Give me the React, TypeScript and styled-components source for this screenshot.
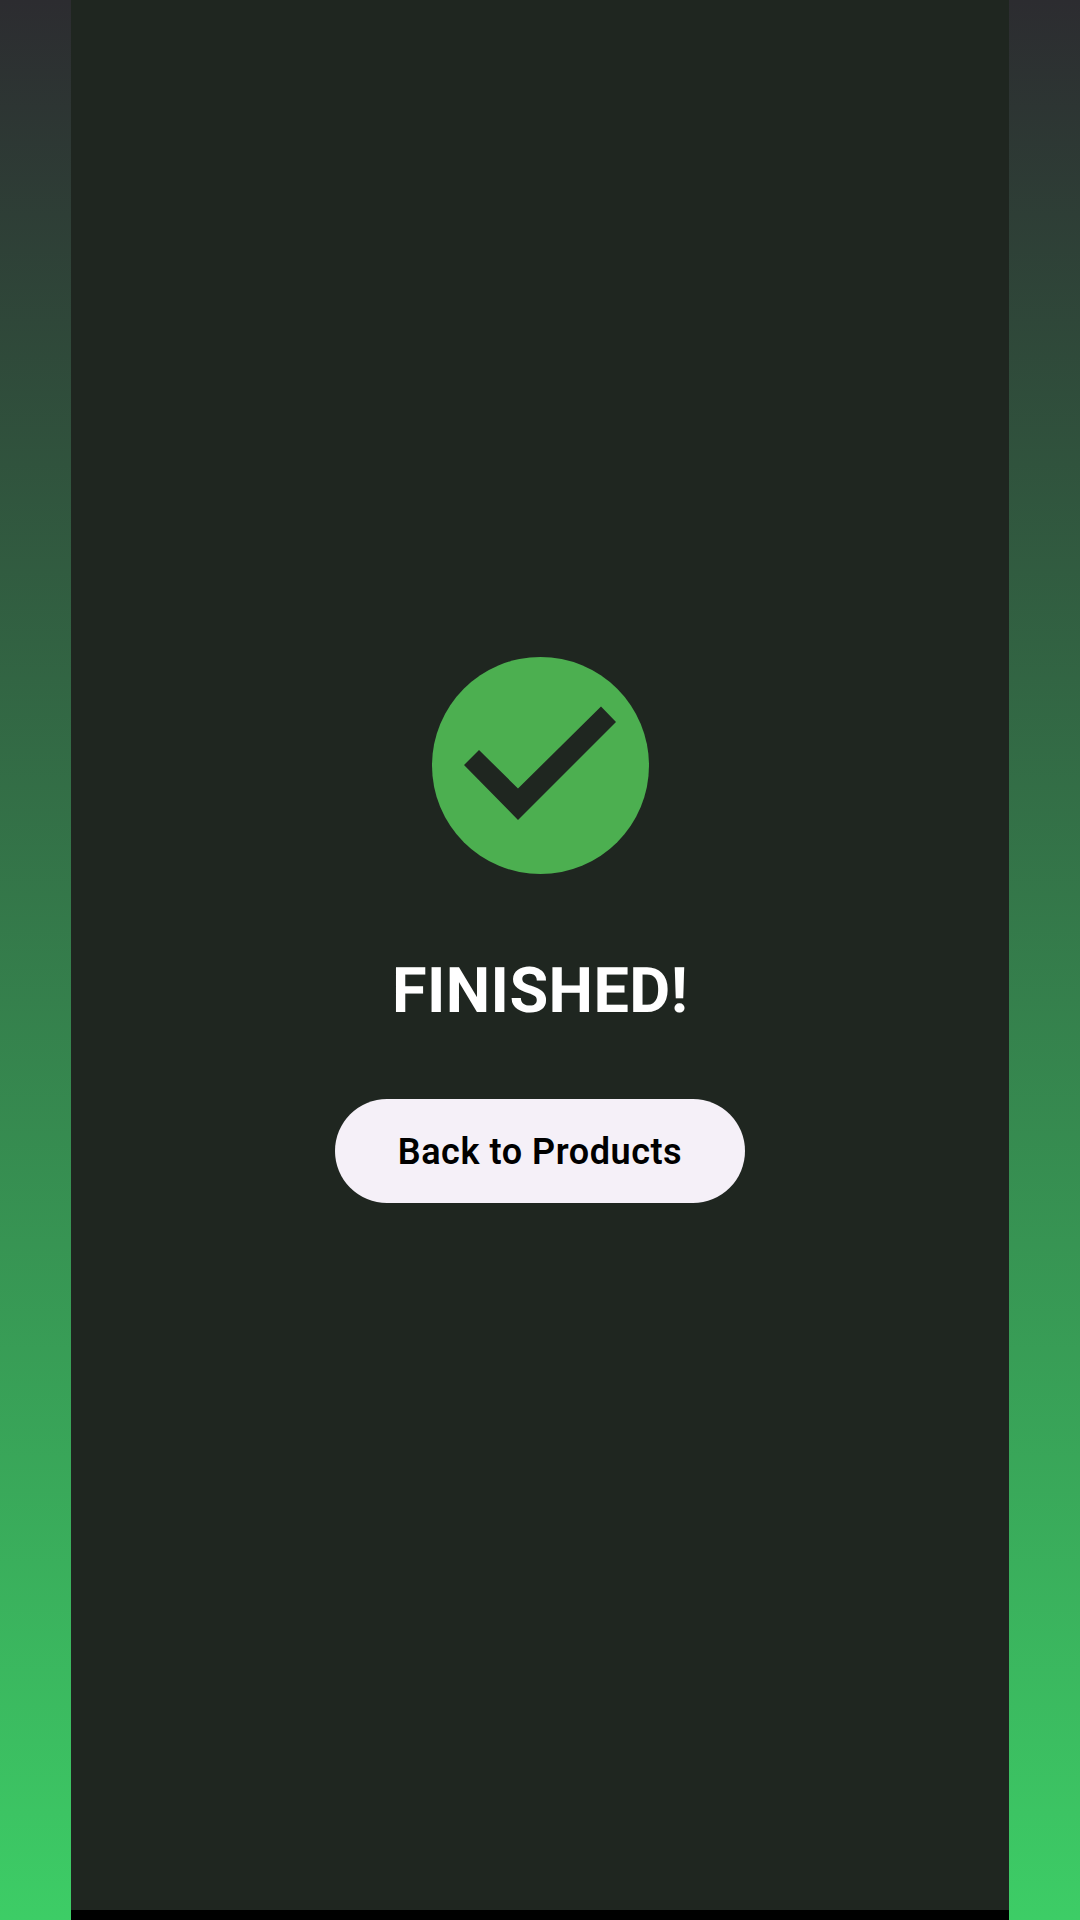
import React from "react";
import styled, { createGlobalStyle } from "styled-components";

const GlobalStyle = createGlobalStyle`
  html, body {
    margin: 0;
    padding: 0;
    background: #000;
  }
`;

const Page = styled.div`
  display: flex;
  justify-content: center;
  width: 1080px;
  height: 1920px;
  overflow: hidden;
  background: linear-gradient(180deg, #2c2c30 0%, #3dcd66 100%);
  font-family: Roboto, "Liberation Sans", sans-serif;
  text-rendering: geometricPrecision;
`;

const Phone = styled.div`
  display: flex;
  flex-direction: column;
  width: 938px;
  background: #000;
`;

const Screen = styled.main`
  display: flex;
  flex-direction: column;
  align-items: center;
  justify-content: center;
  height: 1910px;
  padding-bottom: 50px;
  box-sizing: border-box;
  background: #1f2620;
`;

const CheckBadge = styled.svg`
  display: block;
  width: 217px;
  height: 217px;
`;

const Title = styled.h1`
  margin: 82px 0 0;
  font-size: 63px;
  line-height: 72px;
  font-weight: 700;
  letter-spacing: 0.4px;
  color: #fff;
`;

const BackButton = styled.button`
  width: 410px;
  height: 104px;
  margin-top: 71px;
  padding: 2px 0 0;
  border: none;
  border-radius: 52px;
  background: #f5f0f8;
  color: #000;
  font-family: inherit;
  font-size: 36px;
  font-weight: 650;
  letter-spacing: 0.55px;
`;

export default function App() {
  return (
    <Page>
      <GlobalStyle />
      <Phone>
        <Screen>
          <CheckBadge viewBox="0 0 217 217">
            <circle cx="108.5" cy="108.5" r="108.5" fill="#4caf50" />
            <path
              d="M32 108L47 93L86 131.5L169 49.5L184 65L86 163Z"
              fill="#1f2620"
            />
          </CheckBadge>
          <Title>FINISHED!</Title>
          <BackButton>Back to Products</BackButton>
        </Screen>
      </Phone>
    </Page>
  );
}
